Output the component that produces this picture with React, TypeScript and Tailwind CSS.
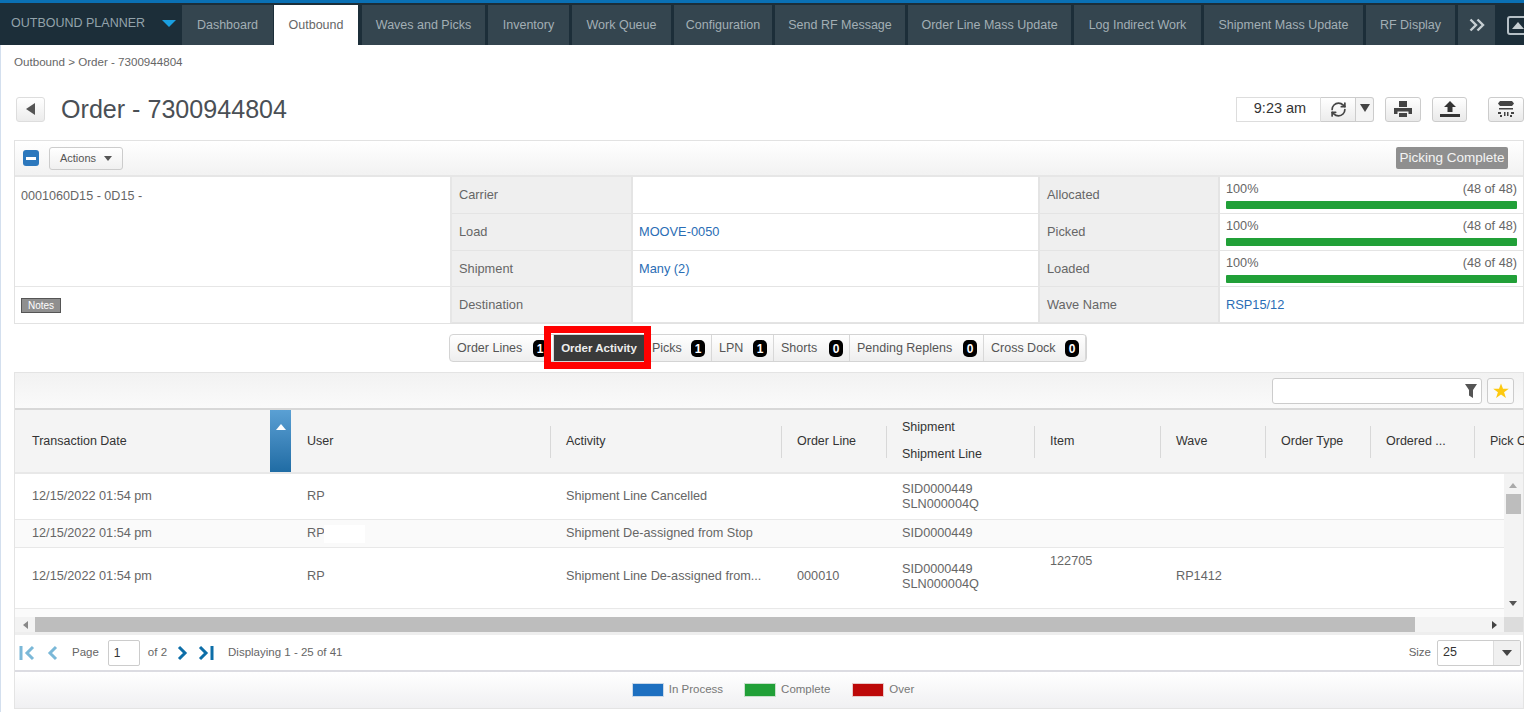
import { Fragment } from 'react';
import { RefreshCw } from 'lucide-react';

const navTabs = [
  { label: 'Dashboard', w: 'w-[92px] pr-[1px]' },
  { label: 'Outbound', w: 'w-[88px] pr-[4px]', active: true },
  { label: 'Waves and Picks', w: 'w-[126px] pr-[3px]' },
  { label: 'Inventory', w: 'w-[84px] pr-[3px]' },
  { label: 'Work Queue', w: 'w-[102px] pr-[3px]' },
  { label: 'Configuration', w: 'w-[101px] pr-[3px]' },
  { label: 'Send RF Message', w: 'w-[133px] pr-[3px]' },
  { label: 'Order Line Mass Update', w: 'w-[166px] pr-[3px]' },
  { label: 'Log Indirect Work', w: 'w-[130px] pr-[3px]' },
  { label: 'Shipment Mass Update', w: 'w-[162px] pr-[3px]' },
  { label: 'RF Display', w: 'w-[92px] pr-[3px]' },
];

const subTabs = [
  { label: 'Order Lines', count: 1, w: 'w-[104px]' },
  { label: 'Order Activity', w: 'w-[91px]', active: true },
  { label: 'Picks', count: 1, w: 'w-[67px]' },
  { label: 'LPN', count: 1, w: 'w-[62px]' },
  { label: 'Shorts', count: 0, w: 'w-[76px]' },
  { label: 'Pending Replens', count: 0, w: 'w-[134px]' },
  { label: 'Cross Dock', count: 0, w: 'w-[102px]' },
];

const cols = 'grid grid-cols-[276px_259px_231px_105px_148px_126px_105px_105px_104px_30px]';

const headers = ['Transaction Date', 'User', 'Activity', 'Order Line', '', 'Item', 'Wave', 'Order Type', 'Ordered ...', 'Pick O'];

function Progress() {
  return (
    <div className="px-[6px] pt-[5px]">
      <div className="flex justify-between text-[12.7px] leading-[14px] text-[#666]">
        <span>100%</span>
        <span>(48 of 48)</span>
      </div>
      <div className="mt-[5px] h-[8px] rounded-[1px] bg-[#21a038]" />
    </div>
  );
}

function IconBtn({ children, w = 'w-[36px]' }: { children: React.ReactNode; w?: string }) {
  return (
    <div className={`flex h-[25px] ${w} items-center justify-center rounded-[3px] border border-[#ccc] bg-gradient-to-b from-white to-[#e9e9e9]`}>
      {children}
    </div>
  );
}

function SortRow({ cells, h, alt }: { cells: React.ReactNode[]; h: string; alt?: boolean }) {
  return (
    <div className={`${cols} ${h} items-center border-b border-[#e8e8e8] text-[12.7px] text-[#666] ${alt ? 'bg-[#fafafa]' : 'bg-white'}`}>
      {cells.map((c, i) => (
        <div key={i} className={`whitespace-nowrap ${i === 0 ? 'pl-[17px]' : 'pl-[16px]'}`}>
          {c}
        </div>
      ))}
    </div>
  );
}

export default function App() {
  return (
    <div className="relative h-[712px] w-[1524px] overflow-hidden bg-white font-['Liberation_Sans',Arial,sans-serif]">
      {/* top nav */}
      <div className="h-[3px] bg-[#0a70b4]" />
      <div className="flex h-[42px] items-end bg-[#1c2e39]">
        <div className="flex h-full w-[182px] shrink-0 items-center whitespace-nowrap pb-[2px] pl-[11px] text-[12.5px] text-[#93a3ab]">
          <span>OUTBOUND PLANNER</span>
          <span className="ml-[17px] h-0 w-0 border-x-[7px] border-t-[7px] border-x-transparent border-t-[#1a9fe0]" />
        </div>
        <div className="flex h-[40px] shrink-0">
          {navTabs.map((t) => (
            <div key={t.label} className={`flex ${t.w}`}>
              <div className={`flex flex-1 items-center justify-center whitespace-nowrap pt-[1px] text-[12.5px] ${t.active ? 'bg-white text-[#666]' : 'bg-[#34454f] text-[#a3afb5]'}`}>
                {t.label}
              </div>
            </div>
          ))}
          <div className="flex w-[37px] items-center justify-center bg-[#34454f]">
            <svg width="16" height="14" viewBox="0 0 16 14" fill="none" stroke="#c6ced2" strokeWidth="2.4">
              <path d="M1.5 1.5 7 7l-5.5 5.5M8.5 1.5 14 7l-5.5 5.5" />
            </svg>
          </div>
        </div>
        <div className="ml-[12px] flex h-[40px] shrink-0 items-center">
          <div className="flex h-[19px] w-[30px] shrink-0 items-center rounded-[3px] border-2 border-[#b5c0c6] pl-[3px]">
            <span className="h-0 w-0 border-x-[6px] border-b-[7px] border-x-transparent border-b-[#c6ced2]" />
          </div>
        </div>
      </div>

      {/* page body */}
      <div className="h-[667px] border-l border-[#d3dfee] pl-[13px]">
        <div className="pt-[10px] text-[11.6px] leading-[13px] text-[#666]">Outbound &gt; Order - 7300944804</div>

        <div className="mt-[27px] flex h-[28px] items-center">
          <div className="ml-[2px] flex h-[25px] w-[29px] items-center justify-center rounded-[3px] border border-[#ddd] bg-gradient-to-b from-white to-[#ececec]">
            <span className="h-0 w-0 border-y-[6px] border-r-[9px] border-y-transparent border-r-[#555]" />
          </div>
          <h1 className="ml-[16px] text-[25.1px] leading-[28px] text-[#4a4f55]">Order - 7300944804</h1>
          <div className="ml-auto flex items-center">
            <div className="flex h-[25px] w-[85px] items-center justify-center border border-[#ddd] pl-[3px] text-[14.5px] text-[#333]">9:23 am</div>
            <div className="flex h-[25px] w-[35px] items-center justify-center border-y border-r border-[#ccc] bg-gradient-to-b from-white to-[#ececec]">
              <RefreshCw size={17} strokeWidth={2.4} color="#444" />
            </div>
            <div className="flex h-[25px] w-[18px] items-center justify-center rounded-r-[3px] border-y border-r border-[#ccc] bg-[#f4f4f4]">
              <span className="mb-[3px] h-0 w-0 border-x-[5px] border-t-[8px] border-x-transparent border-t-[#444]" />
            </div>
            <div className="ml-[11px]">
              <IconBtn>
                <svg width="20" height="18" viewBox="0 0 20 18" fill="#444">
                  <path d="M6 1H14V7H6ZM1 8H19V14H15.5V11.5H4.5V14H1ZM6 13H14V17H6Z" />
                </svg>
              </IconBtn>
            </div>
            <div className="ml-[11px]">
              <IconBtn w="w-[35px]">
                <svg width="22" height="18" viewBox="0 0 22 18" fill="#333">
                  <path d="M11 1 17 7H13.5V12H8.5V7H5ZM1 14H21V17H1Z" />
                </svg>
              </IconBtn>
            </div>
            <div className="ml-[21px]">
              <IconBtn>
                <svg width="20" height="18" viewBox="0 0 20 18" fill="#444">
                  <path d="M2 3.5 4 1H16L18 3.5 16 6H4Z" />
                  <path d="M3 8H17V9.5H3ZM2 12H5V14H2ZM8 12H9.5V16H8ZM11 12H12.5V16H11ZM15 12H18V14H15ZM4 15H6V17H4ZM14 15H16V17H14Z" />
                </svg>
              </IconBtn>
            </div>
          </div>
        </div>

        {/* order panel */}
        <div className="mt-[17px] border border-[#e2e2e2]">
          <div className="flex h-[36px] items-center border-b-2 border-[#e6e6e6] bg-gradient-to-b from-white to-[#f2f2f2] pl-[8px]">
            <div className="flex h-[16px] w-[16px] items-center justify-center rounded-[3px] bg-[#2c78bd]">
              <span className="h-[3px] w-[10px] bg-white" />
            </div>
            <div className="ml-[10px] flex h-[23px] w-[74px] items-center justify-center rounded-[3px] border border-[#ccc] bg-gradient-to-b from-white to-[#f0f0f0] text-[11px] text-[#555]">
              Actions
              <span className="ml-[8px] h-0 w-0 border-x-[4px] border-t-[5px] border-x-transparent border-t-[#555]" />
            </div>
            <div className="ml-auto mr-[15px] flex h-[22px] w-[112px] items-center justify-center rounded-[2px] bg-[#8f8f8f] text-[13.5px] text-[#f4f4f4]">
              Picking Complete
            </div>
          </div>
          <div className="grid grid-cols-[437px_1fr]">
            <div className="flex flex-col border-r-2 border-[#e6e6e6]">
              <div className="h-[110px] border-b border-[#e6e6e6] px-[6px] pt-[12px] text-[12.6px] leading-[14px] text-[#666]">
                0001060D15 - 0D15 -
              </div>
              <div className="flex h-[36px] items-center px-[6px]">
                <span className="border border-[#555] bg-[#8f8f8f] px-[6px] text-[10px] leading-[13px] text-white">Notes</span>
              </div>
            </div>
            <div className="grid grid-cols-[181px_407px_180px_1fr] text-[12.8px] text-[#666]">
              {[
                { l: 'Carrier', v: null, l2: 'Allocated', h: 'h-[37px]' },
                { l: 'Load', v: 'MOOVE-0050', l2: 'Picked', h: 'h-[37px]' },
                { l: 'Shipment', v: 'Many (2)', l2: 'Loaded', h: 'h-[36px]' },
                { l: 'Destination', v: null, l2: 'Wave Name', h: 'h-[36px]', last: true },
              ].map((r) => (
                <Fragment key={r.l}>
                  <div className={`flex ${r.h} items-center border-b border-r-2 border-[#e4e4e4] bg-[#efefef] pl-[7px]`}>{r.l}</div>
                  <div className={`flex ${r.h} items-center border-b border-r-2 border-[#e4e4e4] pl-[6px] text-[#2a6db5]`}>{r.v}</div>
                  <div className={`flex ${r.h} items-center border-b border-r-2 border-[#e4e4e4] bg-[#efefef] pl-[7px]`}>{r.l2}</div>
                  {r.last ? (
                    <div className={`flex ${r.h} items-center border-b border-[#e4e4e4] pl-[6px] text-[#2a6db5]`}>RSP15/12</div>
                  ) : (
                    <div className={`${r.h} border-b border-[#e4e4e4]`}>
                      <Progress />
                    </div>
                  )}
                </Fragment>
              ))}
            </div>
          </div>
        </div>

        {/* sub tabs */}
        <div className="ml-[435px] mt-[10px] flex h-[28px] w-[638px] rounded-[4px] border border-[#d4d4d4] bg-gradient-to-b from-white to-[#eeeeee] text-[12.5px] text-[#555]">
          {subTabs.map((t) => (
            <div
              key={t.label}
              className={`flex ${t.w} items-center justify-between border-r border-[#d8d8d8] pt-[1px] ${t.active ? 'justify-center bg-[#3a3a3a] text-[11.5px] font-bold text-[#eee]' : 'pl-[7px] pr-[6px]'}`}
            >
              <span className="whitespace-nowrap">{t.label}</span>
              {t.count !== undefined && (
                <span className="flex h-[17px] w-[14px] items-center justify-center rounded-[5px] bg-black text-[12px] font-bold text-white">{t.count}</span>
              )}
            </div>
          ))}
        </div>

        {/* activity grid */}
        <div className="mt-[10px] border border-[#e4e4e4]">
          <div className="flex h-[37px] items-center justify-end border-b-2 border-[#d8d8d8] bg-gradient-to-b from-[#f2f2f2] to-[#fafafa] pr-[9px]">
            <div className="flex h-[26px] w-[210px] items-center justify-end rounded-[3px] border border-[#ccc] bg-white pr-[4px]">
              <svg width="12" height="14" viewBox="0 0 12 14" fill="#555">
                <path d="M0 0H12L8 6V14L4 11.5V6Z" />
              </svg>
            </div>
            <div className="ml-[5px] flex h-[26px] w-[27px] items-center justify-center rounded-[3px] border border-[#ccc] bg-[#fafafa]">
              <svg width="16" height="16" viewBox="0 0 16 16" fill="#fdc90f">
                <path d="M8 0.5 10 5.8H15.8L11.1 9.2 12.9 15 8 11.5 3.1 15 4.9 9.2 0.2 5.8H6Z" />
              </svg>
            </div>
          </div>

          <div className={`${cols} h-[64px] items-center border-b-2 border-[#e8e8e8] bg-[#f4f4f4] text-[12.5px] text-[#333]`}>
            {headers.map((h, i) => (
              <div key={i} className={`relative flex h-full items-center whitespace-nowrap ${i === 0 ? 'pl-[17px]' : 'pl-[16px]'}`}>
                {i === 4 ? (
                  <div className="flex flex-col gap-[12px] leading-[15px]">
                    <span>Shipment</span>
                    <span>Shipment Line</span>
                  </div>
                ) : (
                  h
                )}
                {i === 0 && (
                  <div className="absolute right-0 top-0 flex h-full w-[21px] justify-center bg-gradient-to-b from-[#5aa0d4] to-[#1f6ca4] pt-[14px]">
                    <span className="h-0 w-0 border-x-[5px] border-b-[6px] border-x-transparent border-b-white" />
                  </div>
                )}
                {i > 1 && <span className="absolute left-0 top-[16px] h-[32px] w-px bg-[#d8d8d8]" />}
              </div>
            ))}
          </div>

          <div className="flex h-[143px]">
            <div className="min-w-0 flex-1 overflow-hidden bg-[#fbfbfb]">
              <SortRow
                h="h-[46px] pt-[1px]"
                cells={[
                  '12/15/2022 01:54 pm',
                  'RP',
                  'Shipment Line Cancelled',
                  '',
                  <div className="leading-[15px]">SID0000449<br />SLN000004Q</div>,
                ]}
              />
              <SortRow
                h="h-[28px] pt-[1px]"
                alt
                cells={[
                  '12/15/2022 01:54 pm',
                  <span className="flex items-center">
                    RP
                    <span className="-ml-[1px] h-[18px] w-[41px] bg-white" />
                  </span>,
                  'Shipment De-assigned from Stop',
                  '',
                  'SID0000449',
                ]}
              />
              <SortRow
                h="h-[61px] pb-[2px]"
                cells={[
                  '12/15/2022 01:54 pm',
                  'RP',
                  'Shipment Line De-assigned from...',
                  '000010',
                  <div className="leading-[15px]">SID0000449<br />SLN000004Q</div>,
                  <div className="mb-[30px]">122705</div>,
                  'RP1412',
                ]}
              />
            </div>
            <div className="relative h-full w-[19px] shrink-0 bg-[#f3f3f3]">
              <span className="absolute left-[5px] top-[9px] h-0 w-0 border-x-[4px] border-b-[5px] border-x-transparent border-b-[#aaa]" />
              <span className="absolute left-[2px] top-[20px] h-[20px] w-[15px] bg-[#bdbdbd]" />
              <span className="absolute bottom-[11px] left-[5px] h-0 w-0 border-x-[4px] border-t-[5px] border-x-transparent border-t-[#555]" />
            </div>
          </div>

          <div className="flex h-[18px] items-stretch border-b-[3px] border-[#eeeeee] bg-[#f3f3f3]">
            <div className="flex w-[20px] items-center justify-center">
              <span className="h-0 w-0 border-y-[4px] border-r-[5px] border-y-transparent border-r-[#888]" />
            </div>
            <div className="w-[1380px] bg-[#bdbdbd]" />
            <div className="flex flex-1 items-center justify-end">
              <span className="mr-[7px] h-0 w-0 border-y-[4px] border-l-[5px] border-y-transparent border-l-[#444]" />
            </div>
            <div className="w-[19px] bg-[#dcdcdc]" />
          </div>

          {/* pager */}
          <div className="flex h-[37px] items-center border-b-2 border-[#dcdce2] pl-[4px] text-[11.5px] text-[#666]">
            <svg width="17" height="16" viewBox="0 0 17 16" fill="none" stroke="#7ab8d8" strokeWidth="3">
              <path d="M2 1v14M14 2 8 8l6 6" />
            </svg>
            <svg className="ml-[10px]" width="13" height="16" viewBox="0 0 13 16" fill="none" stroke="#7ab8d8" strokeWidth="3">
              <path d="M10 2 4 8l6 6" />
            </svg>
            <span className="ml-[13px]">Page</span>
            <div className="ml-[9px] flex h-[26px] w-[32px] items-center rounded-[2px] border border-[#ccc] pl-[5px] text-[12px] text-[#333]">1</div>
            <span className="ml-[8px]">of 2</span>
            <svg className="ml-[9px]" width="13" height="16" viewBox="0 0 13 16" fill="none" stroke="#0d6ea8" strokeWidth="3">
              <path d="M3 2l6 6-6 6" />
            </svg>
            <svg className="ml-[9px]" width="17" height="16" viewBox="0 0 17 16" fill="none" stroke="#0d6ea8" strokeWidth="3">
              <path d="M2 2l6 6-6 6M14 1v14" />
            </svg>
            <span className="ml-[13px]">Displaying 1 - 25 of 41</span>
            <div className="ml-auto flex items-center">
              <span>Size</span>
              <div className="ml-[6px] mr-[2px] flex h-[26px] w-[84px] items-stretch rounded-[2px] border border-[#ccc] text-[12.5px] text-[#333]">
                <span className="flex-1 self-center pl-[5px]">25</span>
                <span className="flex w-[27px] items-center justify-center border-l border-[#ddd] bg-[#f0f0f0]">
                  <span className="h-0 w-0 border-x-[5px] border-t-[6px] border-x-transparent border-t-[#444]" />
                </span>
              </div>
            </div>
          </div>

          {/* legend */}
          <div className="flex h-[36px] items-center justify-center bg-gradient-to-b from-white to-[#f0f0f2] pl-[8px] text-[11.5px] text-[#777]">
            <span className="h-[14px] w-[32px] border border-[#c9d8e8] bg-[#1d6fc0]" />
            <span className="ml-[5px]">In Process</span>
            <span className="ml-[21px] h-[14px] w-[32px] border border-[#c9e0cc] bg-[#21a038]" />
            <span className="ml-[5px]">Complete</span>
            <span className="ml-[22px] h-[14px] w-[32px] border border-[#e8c9c9] bg-[#bd0909]" />
            <span className="ml-[5px]">Over</span>
          </div>
        </div>
      </div>

      {/* red annotation drawn over the tabs */}
      <div className="absolute left-[544px] top-[326px] h-[43px] w-[107px] border-[7px] border-[#ff0000]" />
    </div>
  );
}
